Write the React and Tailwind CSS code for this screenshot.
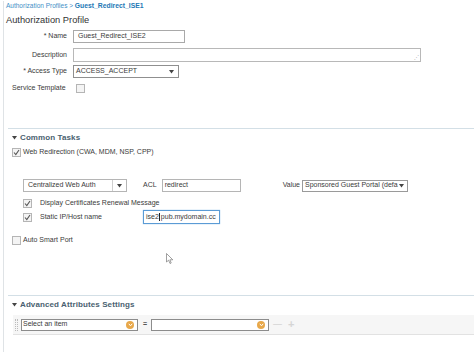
import React from 'react';

function Check({ checked }) {
  return (
    <span className="inline-flex h-[9px] w-[9px] shrink-0 items-center justify-center border border-[#b5b5b5] bg-[#f4f4f4]">
      {checked && (
        <svg width="7" height="7" viewBox="0 0 7 7">
          <path d="M1 3.5 L2.8 5.5 L6 1" stroke="#555" strokeWidth="1.1" fill="none" />
        </svg>
      )}
    </span>
  );
}

function Caret() {
  return (
    <svg width="5" height="4" viewBox="0 0 5 4">
      <path d="M0 0 H5 L2.5 3.5 Z" fill="#444" />
    </svg>
  );
}

function OrangeDot() {
  return (
    <span className="inline-flex h-[8px] w-[8px] items-center justify-center rounded-full bg-[#e8a84a]">
      <svg width="5" height="4" viewBox="0 0 5 4">
        <path d="M0.8 0.8 L2.5 2.8 L4.2 0.8" stroke="#fff" strokeWidth="1" fill="none" />
      </svg>
    </span>
  );
}

function SectionHeader({ title }) {
  return (
    <div className="flex h-[10px] items-center gap-[3px] pl-[6px] text-[8px] font-bold text-[#4a5f70]">
      <Caret />
      <span className="tracking-[0.1px]">{title}</span>
    </div>
  );
}

export default function App() {
  return (
    <div className="relative h-[352px] w-[474px] overflow-hidden bg-white font-['Liberation_Sans',Arial,sans-serif] text-[7px] text-[#3a3a3a]">
      <div className="ml-[3px] h-full border-l border-[#dfe3e6] pl-[2px]">
        {/* breadcrumb */}
        <div className="mt-[1px] flex h-[10px] items-center text-[6.5px] text-[#3f8fc6]">
          <span>Authorization Profiles &gt;&nbsp;</span>
          <span className="text-[6.8px] font-bold text-[#2378b5]">Guest_Redirect_ISE1</span>
        </div>
        <div className="mt-[3px] h-[12px] text-[9.3px] leading-[12px] text-[#333]">Authorization Profile</div>

        {/* profile form */}
        <div className="mt-[4px] flex h-[13px] items-center">
          <span className="w-[62px] pr-[1px] text-right">* Name</span>
          <div className="ml-[5px] flex h-[13px] w-[112px] items-center border border-[#a9a9a9] px-[4px] text-[7px]">Guest_Redirect_ISE2</div>
        </div>
        <div className="mt-[5px] flex h-[14px] items-center">
          <span className="w-[62px] pr-[1px] text-right">Description</span>
          <div className="relative ml-[5px] h-[14px] w-[348px] border border-[#b8b8b8]">
            <span className="absolute bottom-[1px] right-[1px] text-[5px] leading-none text-[#aaa]">⋰</span>
          </div>
        </div>
        <div className="mt-[3px] flex h-[13px] items-center">
          <span className="w-[62px] pr-[1px] text-right">* Access Type</span>
          <div className="ml-[5px] flex h-[13px] w-[106px] items-center justify-between border border-[#8f8f8f] pl-[2px] pr-[4px]">
            <span>ACCESS_ACCEPT</span>
            <Caret />
          </div>
        </div>
        <div className="mt-[5px] flex h-[10px] items-center pl-[6px]">
          <span className="w-[64px]">Service Template</span>
          <Check />
        </div>

        {/* common tasks */}
        <div className="ml-[2px] mt-[35px] border-t border-[#d3dfe6]" />
        <div className="mt-[4px]">
          <SectionHeader title="Common Tasks" />
        </div>
        <div className="mt-[4px] flex h-[10px] items-center gap-[2px] pl-[6px]">
          <Check checked />
          <span>Web Redirection (CWA, MDM, NSP, CPP)</span>
        </div>
        <div className="mt-[22px] flex h-[13px] items-center pl-[17px]">
          <div className="flex h-[13px] w-[104px] items-center border border-[#b5b5b5]">
            <span className="flex-1 pl-[4px]">Centralized Web Auth</span>
            <span className="flex h-full w-[14px] items-center justify-center border-l border-[#cfcfcf]">
              <Caret />
            </span>
          </div>
          <span className="ml-[16px]">ACL</span>
          <div className="ml-[5px] flex h-[13px] w-[79px] items-center border border-[#b5b5b5] pl-[2px]">redirect</div>
          <span className="ml-[42px]">Value</span>
          <div className="ml-[2px] flex h-[12px] w-[106px] items-center justify-between border border-[#9a9a9a] pl-[2px] pr-[3px]">
            <span>Sponsored Guest Portal (defa</span>
            <Caret />
          </div>
        </div>
        <div className="mt-[6px] flex h-[10px] items-center pl-[17px]">
          <Check checked />
          <span className="ml-[8px]">Display Certificates Renewal Message</span>
        </div>
        <div className="mt-[2px] flex h-[14px] items-center pl-[17px]">
          <Check checked />
          <span className="ml-[8px] w-[103px]">Static IP/Host name</span>
          <div className="flex h-[14px] w-[77px] items-center border border-[#5b9bd5] pl-[2px] shadow-[0_0_1px_#7fb6e6]">
            ise2<span className="mx-[0.5px] inline-block h-[8px] w-[1px] bg-[#222]" />pub.mydomain.cc
          </div>
        </div>
        <div className="mt-[11px] flex h-[10px] items-center gap-[2px] pl-[6px]">
          <Check />
          <span>Auto Smart Port</span>
        </div>

        {/* advanced attributes */}
        <div className="ml-[2px] mt-[50px] border-t border-[#d3dfe6]" />
        <div className="mt-[4px]">
          <SectionHeader title="Advanced Attributes Settings" />
        </div>
        <div className="ml-[7px] mt-[5px] flex h-[20px] items-center border-b border-[#e2e2e2] bg-[#f6f6f6] pl-[2px]">
          <span className="h-[12px] w-[3px] border-x border-dotted border-[#bbb]" />
          <div className="ml-[3px] flex h-[12px] w-[117px] items-center justify-between border border-[#8c8c8c] bg-white pl-[1px] pr-[3px]">
            <span>Select an item</span>
            <OrangeDot />
          </div>
          <span className="ml-[5px] font-bold text-[#555]">=</span>
          <div className="ml-[4px] flex h-[12px] w-[118px] items-center justify-end border border-[#8c8c8c] bg-white pr-[3px]">
            <OrangeDot />
          </div>
          <span className="ml-[4px] text-[9px] text-[#c8c8c8]">—</span>
          <span className="ml-[6px] text-[11px] font-bold leading-none text-[#d5d5d5]">+</span>
        </div>
      </div>

      {/* mouse cursor */}
      <svg className="absolute left-[166px] top-[253px]" width="8" height="12" viewBox="0 0 8 12">
        <path d="M0.5 0.5 L0.5 9 L2.6 7.2 L4 10.5 L5.2 10 L3.9 6.8 L6.8 6.8 Z" fill="#fff" stroke="#777" strokeWidth="0.7" />
      </svg>
    </div>
  );
}
